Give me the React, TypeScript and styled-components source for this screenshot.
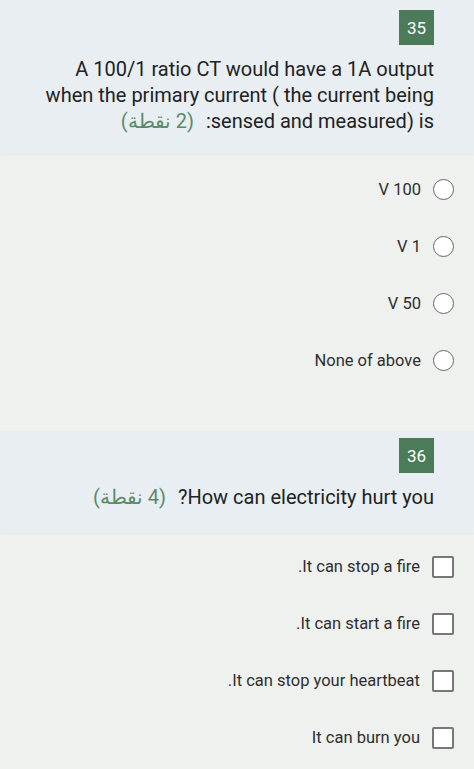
import styled, { createGlobalStyle } from 'styled-components';

const GlobalStyle = createGlobalStyle`
  html, body {
    margin: 0;
    padding: 0;
    background: #eef1ee;
    font-family: Roboto, 'Noto Sans', sans-serif;
  }
`;

const Page = styled.div`
  width: 474px;
  display: flex;
  flex-direction: column;
  direction: rtl;
`;

const Header = styled.div<{ $top: number; $bottom: number }>`
  background: #e8eef1;
  display: flex;
  flex-direction: column;
  align-items: flex-start;
  padding: ${({ $top }) => $top}px 40px ${({ $bottom }) => $bottom}px 32px;
  box-shadow: 0 1px 2px rgba(0, 0, 0, 0.04);
`;

const Badge = styled.div`
  width: 35px;
  height: 35px;
  background: #4b7b59;
  color: #fff;
  font-size: 17px;
  display: flex;
  align-items: center;
  justify-content: center;
`;

const Question = styled.div`
  margin-top: 11px;
  font-size: 20px;
  line-height: 26px;
  color: #222;
  text-align: right;
`;

const Points = styled.span`
  color: #5b8a68;
  margin-right: 12px;
`;

const Options = styled.div<{ $top: number; $bottom: number }>`
  display: flex;
  flex-direction: column;
  padding: ${({ $top }) => $top}px 20px ${({ $bottom }) => $bottom}px 0;
`;

const Row = styled.label`
  height: 57px;
  display: flex;
  align-items: center;
  gap: 12px;
  font-size: 16.5px;
  color: #2e2e2e;
`;

const Radio = styled.span`
  width: 19px;
  height: 19px;
  border-radius: 50%;
  border: 1.5px solid #666;
  background: #fff;
  flex-shrink: 0;
`;

const Check = styled.span`
  width: 18px;
  height: 18px;
  border-radius: 2px;
  border: 2px solid #777;
  background: #fff;
  flex-shrink: 0;
`;

const q1Options = ['100 V', '1 V', '50 V', 'None of above'];
const q2Options = [
  'It can stop a fire.',
  'It can start a fire.',
  'It can stop your heartbeat.',
  'It can burn you',
];

export default function App() {
  return (
    <Page>
      <GlobalStyle />
      <Header $top={10} $bottom={20}>
        <Badge>35</Badge>
        <Question>
          A 100/1 ratio CT would have a 1A output when the primary current ( the
          current being sensed and measured) is:
          <Points>(2 نقطة)</Points>
        </Question>
      </Header>
      <Options $top={7} $bottom={42}>
        {q1Options.map((o) => (
          <Row key={o}>
            <Radio />
            <span>{o}</span>
          </Row>
        ))}
      </Options>
      <Header $top={7} $bottom={23}>
        <Badge>36</Badge>
        <Question>
          How can electricity hurt you?
          <Points>(4 نقطة)</Points>
        </Question>
      </Header>
      <Options $top={5} $bottom={0}>
        {q2Options.map((o) => (
          <Row key={o}>
            <Check />
            <span>{o}</span>
          </Row>
        ))}
      </Options>
    </Page>
  );
}
